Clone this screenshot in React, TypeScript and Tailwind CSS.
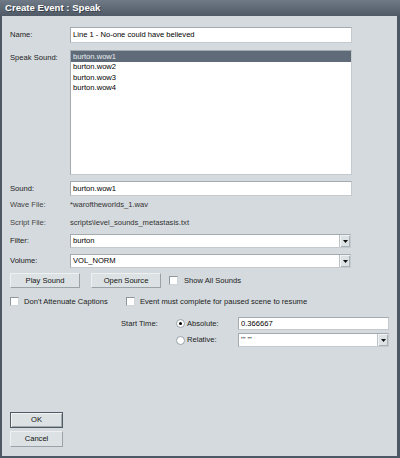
import React from 'react';

const font = { fontFamily: '"Liberation Sans", Arial, sans-serif' };

const Label = ({ children, w = 'w-[60px]' }: { children: React.ReactNode; w?: string }) => (
  <div className={`${w} shrink-0 text-[7.6px] text-[#222]`}>{children}</div>
);

const TextBox = ({ value, className = '' }: { value: string; className?: string }) => (
  <div
    className={`flex items-center border border-t-[#a3abb1] border-l-[#a3abb1] border-r-[#c4cacd] border-b-[#c4cacd] bg-white pl-[2px] text-[7.6px] text-black ${className}`}
  >
    {value}
  </div>
);

const Combo = ({ value, className = '' }: { value: string; className?: string }) => (
  <div
    className={`flex items-stretch border border-t-[#a3abb1] border-l-[#a3abb1] border-r-[#c4cacd] border-b-[#c4cacd] bg-white ${className}`}
  >
    <div className="flex flex-1 items-center pl-[2px] text-[7.6px] text-black">{value}</div>
    <div className="flex w-[11px] items-center justify-center border-l border-l-[#bcc3c7] bg-[#dde2e4] shadow-[inset_1px_1px_0_#f0f2f3,inset_-1px_-1px_0_#aab1b6]">
      <svg width="5" height="3" viewBox="0 0 5 3">
        <path d="M0 0 H5 L2.5 3 Z" fill="#111" />
      </svg>
    </div>
  </div>
);

const Button = ({ children, className = '', isDefault = false }: { children: React.ReactNode; className?: string; isDefault?: boolean }) => (
  <div
    className={`flex items-center justify-center text-[7.6px] text-[#111] bg-[#dce1e3] ${
      isDefault
        ? 'border border-[#505a64] shadow-[inset_1px_1px_0_#f2f4f5,inset_-1px_-1px_0_#a3abb1]'
        : 'border border-t-[#eef1f2] border-l-[#eef1f2] border-r-[#9aa2a8] border-b-[#9aa2a8]'
    } ${className}`}
  >
    {children}
  </div>
);

const Check = () => (
  <div className="h-[9px] w-[9px] shrink-0 border border-t-[#8f979d] border-l-[#8f979d] border-r-[#d0d5d8] border-b-[#d0d5d8] bg-white" />
);

const Radio = ({ on = false }: { on?: boolean }) => (
  <div className="flex h-[9px] w-[9px] shrink-0 items-center justify-center rounded-full border border-[#9aa2a8] bg-white">
    {on && <div className="h-[3px] w-[3px] rounded-full bg-black" />}
  </div>
);

export default function App() {
  const sounds = ['burton.wow1', 'burton.wow2', 'burton.wow3', 'burton.wow4'];
  return (
    <div style={font} className="flex h-[458px] w-[400px] flex-col overflow-hidden bg-[#4e5864]">
      <div className="flex h-[16px] shrink-0 items-center bg-gradient-to-b from-[#6f7a86] to-[#505a66] pl-[5px]">
        <span className="text-[9.6px] font-bold text-white [text-shadow:1px_1px_0_#39414a]">Create Event : Speak</span>
      </div>
      <div className="ml-[2px] mr-[3px] mb-[2px] flex flex-1 flex-col bg-[#d4dadd] pl-[8px]">
        {/* Name */}
        <div className="mt-[11px] flex h-[16px] items-center">
          <Label>Name:</Label>
          <TextBox value="Line 1 - No-one could have believed" className="h-[16px] w-[282px]" />
        </div>

        {/* Speak Sound */}
        <div className="mt-[7px] flex h-[125px] items-start">
          <Label>
            <div className="pt-[2px]">Speak Sound:</div>
          </Label>
          <div className="h-[125px] w-[282px] border border-t-[#a3abb1] border-l-[#a3abb1] border-r-[#c4cacd] border-b-[#c4cacd] bg-white">
            {sounds.map((s, i) => (
              <div
                key={s}
                className={`flex h-[10.5px] items-center pl-[2px] text-[7.6px] ${
                  i === 0 ? 'bg-[#5f6b78] text-[#e8ecef]' : 'text-black'
                }`}
              >
                {s}
              </div>
            ))}
          </div>
        </div>

        {/* Sound */}
        <div className="mt-[6px] flex h-[15px] items-center">
          <Label>Sound:</Label>
          <TextBox value="burton.wow1" className="h-[15px] w-[282px]" />
        </div>

        <div className="mt-[2px] flex h-[14px] items-center">
          <Label>
            <span className="text-[#444]">Wave File:</span>
          </Label>
          <div className="text-[7.6px] text-[#333]">*waroftheworlds_1.wav</div>
        </div>

        <div className="mt-[4px] flex h-[14px] items-center">
          <Label>
            <span className="text-[#444]">Script File:</span>
          </Label>
          <div className="text-[7.6px] text-[#333]">scripts\level_sounds_metastasis.txt</div>
        </div>

        <div className="mt-[4px] flex h-[14px] items-center">
          <Label>Filter:</Label>
          <Combo value="burton" className="h-[14px] w-[281px]" />
        </div>

        <div className="mt-[6px] flex h-[14px] items-center">
          <Label>Volume:</Label>
          <Combo value="VOL_NORM" className="h-[14px] w-[281px]" />
        </div>

        {/* Buttons */}
        <div className="mt-[5px] flex h-[15px] items-center">
          <Button className="h-[15px] w-[70px]">Play Sound</Button>
          <Button className="ml-[11px] h-[15px] w-[70px]">Open Source</Button>
          <div className="ml-[8px] flex items-center gap-[6px]">
            <Check />
            <span className="text-[7.6px] text-[#222]">Show All Sounds</span>
          </div>
        </div>

        <div className="mt-[7px] flex h-[14px] items-center">
          <div className="flex w-[116px] items-center gap-[5px]">
            <Check />
            <span className="text-[7.6px] text-[#222]">Don't Attenuate Captions</span>
          </div>
          <div className="flex items-center gap-[5px]">
            <Check />
            <span className="text-[7.6px] text-[#222]">Event must complete for paused scene to resume</span>
          </div>
        </div>

        {/* Start time */}
        <div className="mt-[8px] flex h-[13px] items-center pl-[111px]">
          <Label w="w-[55px]">Start Time:</Label>
          <Radio on />
          <span className="ml-[2px] w-[51px] text-[7.6px] text-[#222]">Absolute:</span>
          <TextBox value="0.366667" className="h-[13px] w-[151px]" />
        </div>
        <div className="mt-[3px] flex h-[14px] items-center pl-[111px]">
          <div className="w-[55px] shrink-0" />
          <Radio />
          <span className="ml-[2px] w-[51px] text-[7.6px] text-[#222]">Relative:</span>
          <Combo value="''' '''" className="h-[14px] w-[151px]" />
        </div>

        {/* OK / Cancel */}
        <div className="mt-[65px] flex flex-col gap-[3px]">
          <Button isDefault className="h-[16px] w-[53px]">OK</Button>
          <Button className="h-[16px] w-[53px]">Cancel</Button>
        </div>
      </div>
    </div>
  );
}
